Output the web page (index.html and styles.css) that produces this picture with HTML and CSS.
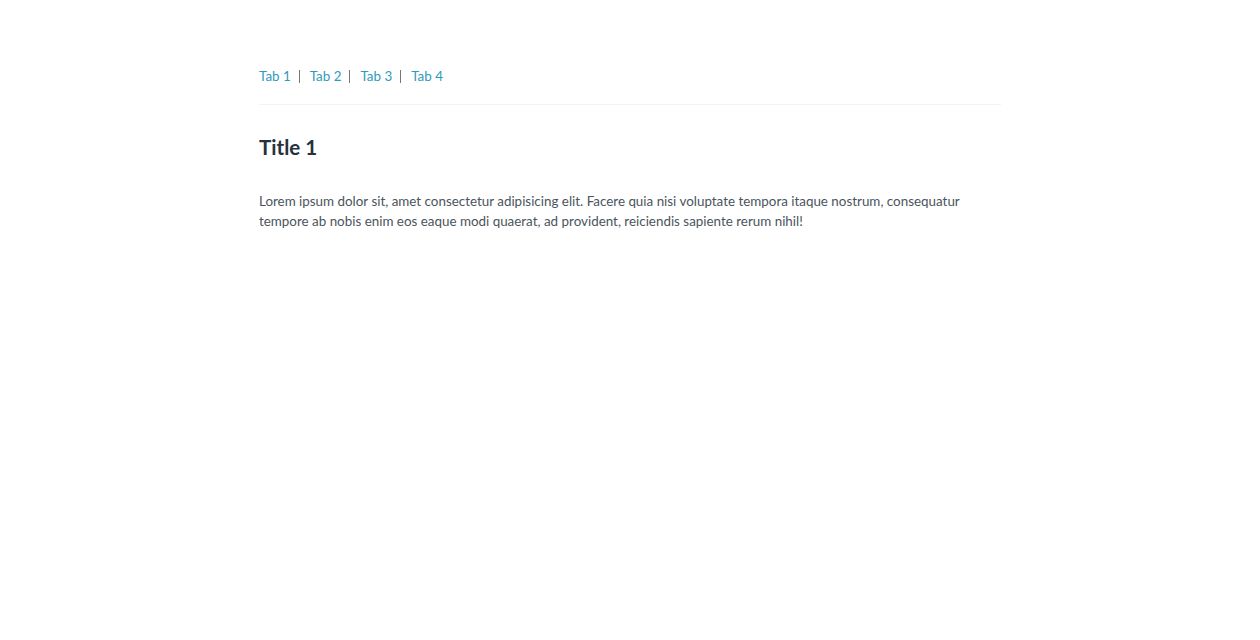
FILE: index.html
```html
<!DOCTYPE html>
<html>
<head>
<meta charset="utf-8">
<link rel="stylesheet" href="styles.css">
</head>
<body>
<div class="container">
  <nav class="tabs">
    <a class="tab" href="#">Tab 1</a><span class="sep"></span>
    <a class="tab" href="#">Tab 2</a><span class="sep"></span>
    <a class="tab" href="#">Tab 3</a><span class="sep"></span>
    <a class="tab" href="#">Tab 4</a>
  </nav>
  <div class="content">
    <h1 class="title">Title 1</h1>
    <p class="text">Lorem ipsum dolor sit, amet consectetur adipisicing elit. Facere quia nisi voluptate tempora itaque nostrum, consequatur tempore ab nobis enim eos eaque modi quaerat, ad provident, reiciendis sapiente rerum nihil!</p>
  </div>
</div>
</body>
</html>
```

FILE: styles.css
```css
html, body {
  margin: 0;
  padding: 0;
  background: #ffffff;
}
body {
  font-family: "Lato", "Noto Sans", sans-serif;
  font-size: 13.4px;
  color: #4a5560;
}
.container {
  width: 742px;
  margin: 0 auto;
  padding-top: 66px;
}
.tabs {
  display: flex;
  align-items: center;
  height: 20px;
  line-height: 20px;
  padding-bottom: 18px;
  border-bottom: 1px solid #f2f3f4;
}
.tab {
  color: #2f9ab9;
  text-decoration: none;
}
.sep {
  display: inline-block;
  width: 1px;
  height: 13px;
  background: #777;
  margin: 1px 10px 0 8px;
}
.content {
  padding-top: 28px;
}
.title {
  margin: 0;
  font-size: 20.6px;
  line-height: 28px;
  font-weight: 700;
  color: #26313c;
}
.text {
  margin: 30px 0 0 0;
  line-height: 20px;
  color: #4b545d;
}
```
